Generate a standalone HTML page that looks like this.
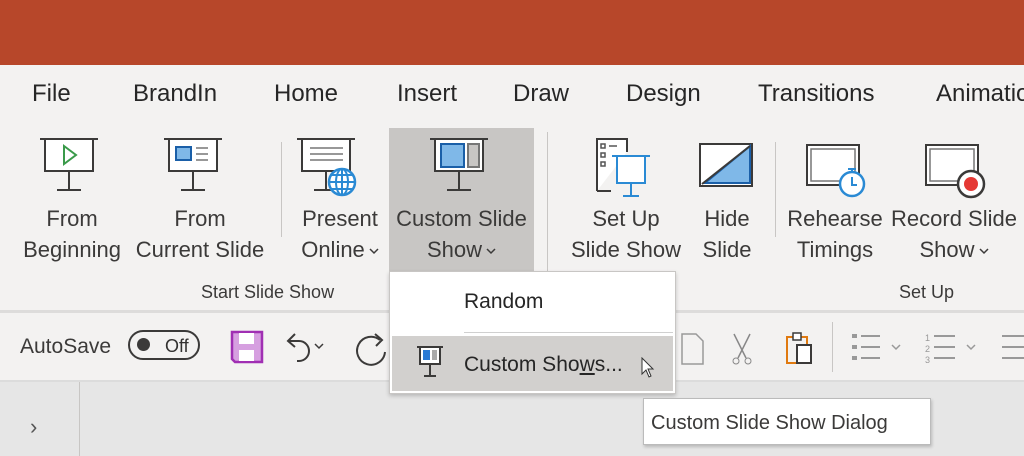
<!DOCTYPE html><html><head><style>
body{margin:0;width:1024px;height:456px;overflow:hidden;position:relative;background:#f3f2f1;font-family:"Liberation Sans",sans-serif;color:#323130}
.a{position:absolute}
.t{position:absolute;top:80px;font-size:24px;color:#262626}
.lbl{position:absolute;font-size:22px;text-align:center;line-height:31px;color:#3b3a39;white-space:nowrap}
.g{position:absolute;top:282px;font-size:18px;color:#3b3a39}
svg{position:absolute}
svg.cv{position:static;display:inline-block;vertical-align:middle;margin-left:4px}
</style></head><body>
<div class="a" style="left:0;top:0;width:1024px;height:65px;background:#b7472a"></div>
<div class="t" style="left:32px">File</div>
<div class="t" style="left:133px">BrandIn</div>
<div class="t" style="left:274px">Home</div>
<div class="t" style="left:397px">Insert</div>
<div class="t" style="left:513px">Draw</div>
<div class="t" style="left:626px">Design</div>
<div class="t" style="left:758px">Transitions</div>
<div class="t" style="left:936px">Animatio</div>
<div class="a" style="left:389px;top:128px;width:145px;height:143px;background:#c8c6c4"></div>
<div class="a" style="left:281px;top:142px;width:1px;height:95px;background:#c8c6c4"></div>
<div class="a" style="left:547px;top:132px;width:1px;height:140px;background:#c8c6c4"></div>
<div class="a" style="left:775px;top:142px;width:1px;height:95px;background:#c8c6c4"></div>
<svg style="left:40px;top:138px" width="60" height="60"><path d="M0 1H58M5 1V33H53V1M29 33V52M17 52H41" stroke="#3b3a39" stroke-width="2" fill="#fff"/><path d="M24 8L36 17L24 26Z" fill="none" stroke="#3a9a4a" stroke-width="2"/></svg>
<svg style="left:164px;top:138px" width="60" height="60"><path d="M0 1H58M5 1V33H53V1M29 33V52M17 52H41" stroke="#3b3a39" stroke-width="2" fill="#fff"/><rect x="12" y="9" width="15" height="13" fill="#7fb8e8" stroke="#1a5fa8" stroke-width="2"/><path d="M32 10H44M32 16H44M32 22H44" stroke="#777" stroke-width="1.5"/></svg>
<svg style="left:297px;top:138px" width="80" height="60"><path d="M0 1H58M5 1V33H53V1M29 33V52M17 52H41" stroke="#3b3a39" stroke-width="2" fill="#fff"/><path d="M13 10H46M13 16H46M13 22H46" stroke="#777" stroke-width="1.5"/><circle cx="45" cy="44" r="13" fill="#fff" stroke="#2a8ad4" stroke-width="2.5"/><path d="M32 44H58M45 31V57M35 37H55M35 51H55" stroke="#2a8ad4" stroke-width="2"/><ellipse cx="45" cy="44" rx="6" ry="13" fill="none" stroke="#2a8ad4" stroke-width="2"/></svg>
<svg style="left:430px;top:138px" width="60" height="60"><path d="M0 1H58M5 1V33H53V1M29 33V52M17 52H41" stroke="#3b3a39" stroke-width="2" fill="#fff"/><rect x="11" y="6" width="23" height="23" fill="#7fb8e8" stroke="#1a5fa8" stroke-width="2"/><rect x="38" y="6" width="11" height="23" fill="#c8c6c4" stroke="#777" stroke-width="2"/></svg>
<svg style="left:596px;top:138px" width="60" height="60"><path d="M1 53V1H31V14" stroke="#3b3a39" stroke-width="2" fill="#fff"/><path d="M1 53H15" stroke="#3b3a39" stroke-width="2"/><rect x="5" y="6" width="4" height="4" fill="none" stroke="#555" stroke-width="1.5"/><rect x="5" y="15" width="4" height="4" fill="none" stroke="#555" stroke-width="1.5"/><rect x="5" y="24" width="4" height="4" fill="none" stroke="#555" stroke-width="1.5"/><path d="M13 8H21" stroke="#555" stroke-width="1.5"/><path d="M16 18H54M21 18V45H49V18M35 45V58M27 58H43" stroke="#2a8ad4" stroke-width="2" fill="#fff"/></svg>
<svg style="left:699px;top:143px" width="56" height="48"><rect x="1" y="1" width="52" height="42" fill="#fff" stroke="#3b3a39" stroke-width="2"/><path d="M51 3V40H6Z" fill="#7fb8e8" stroke="#1a5fa8" stroke-width="2"/><path d="M3 41L51 3" stroke="#3b3a39" stroke-width="2"/></svg>
<svg style="left:806px;top:144px" width="64" height="56"><rect x="1" y="1" width="52" height="40" fill="#fff" stroke="#3b3a39" stroke-width="2"/><rect x="5" y="5" width="44" height="32" fill="none" stroke="#777" stroke-width="1.5"/><circle cx="46" cy="40" r="12" fill="#fff" stroke="#2a8ad4" stroke-width="2.5"/><path d="M46 33V41H51M42 25H50M46 25V28" stroke="#2a8ad4" stroke-width="2" fill="none"/></svg>
<svg style="left:925px;top:144px" width="64" height="56"><rect x="1" y="1" width="52" height="40" fill="#fff" stroke="#3b3a39" stroke-width="2"/><rect x="5" y="5" width="44" height="32" fill="none" stroke="#777" stroke-width="1.5"/><circle cx="46" cy="40" r="13" fill="#fff" stroke="#3b3a39" stroke-width="2.5"/><circle cx="46" cy="40" r="7" fill="#e53935"/></svg>
<div class="lbl" style="left:18px;top:203px;width:108px">From<br>Beginning</div>
<div class="lbl" style="left:128px;top:203px;width:144px">From<br>Current Slide</div>
<div class="lbl" style="left:290px;top:203px;width:100px">Present<br>Online<svg class="cv" width="10" height="8"><path d="M1 2L5 6L9 2" fill="none" stroke="#3b3a39" stroke-width="1.5"/></svg></div>
<div class="lbl" style="left:385px;top:203px;width:153px">Custom Slide<br>Show<svg class="cv" width="10" height="8"><path d="M1 2L5 6L9 2" fill="none" stroke="#3b3a39" stroke-width="1.5"/></svg></div>
<div class="lbl" style="left:564px;top:203px;width:124px">Set Up<br>Slide Show</div>
<div class="lbl" style="left:695px;top:203px;width:64px">Hide<br>Slide</div>
<div class="lbl" style="left:783px;top:203px;width:104px">Rehearse<br>Timings</div>
<div class="lbl" style="left:884px;top:203px;width:140px">Record Slide<br>Show<svg class="cv" width="10" height="8"><path d="M1 2L5 6L9 2" fill="none" stroke="#3b3a39" stroke-width="1.5"/></svg></div>
<div class="g" style="left:201px">Start Slide Show</div>
<div class="g" style="left:899px">Set Up</div>
<div class="a" style="left:0;top:310px;width:1024px;height:3px;background:#dddcdb"></div>
<div class="a" style="left:20px;top:335px;font-size:21px;color:#3b3a39">AutoSave</div>
<div class="a" style="left:128px;top:330px;width:72px;height:30px;border:2px solid #3b3a39;border-radius:16px;box-sizing:border-box"></div>
<div class="a" style="left:137px;top:338px;width:13px;height:13px;border-radius:50%;background:#3b3a39"></div>
<div class="a" style="left:165px;top:336px;font-size:18px">Off</div>
<svg style="left:230px;top:330px" width="34" height="34"><path d="M2 2H32V32H5L2 29Z" fill="#d69fe0" stroke="#a02fb3" stroke-width="2.5"/><rect x="9" y="3" width="15" height="11" fill="#fff"/><rect x="9" y="20" width="15" height="11" fill="#fff"/></svg>
<svg style="left:285px;top:330px" width="60" height="34"><path d="M10 4L3 11L10 17M3 11H14A10 10 0 0 1 14 31H12" fill="none" stroke="#3b3a39" stroke-width="2"/><path d="M30 14L34 18L38 14" fill="none" stroke="#3b3a39" stroke-width="1.5"/></svg>
<svg style="left:355px;top:330px" width="36" height="38"><path d="M25 10A14 14 0 1 0 30 22" fill="none" stroke="#3b3a39" stroke-width="2"/><path d="M20 4L27 10L21 16" fill="none" stroke="#3b3a39" stroke-width="2"/></svg>
<svg style="left:676px;top:333px" width="30" height="34"><path d="M6 1H20L27 8V31H6Z" fill="none" stroke="#999" stroke-width="1.5"/></svg>
<svg style="left:730px;top:333px" width="24" height="34"><path d="M4 1L16 25M20 1L8 25" stroke="#888" stroke-width="1.5"/><circle cx="6" cy="28" r="3" fill="none" stroke="#888"/><circle cx="18" cy="28" r="3" fill="none" stroke="#888"/></svg>
<svg style="left:785px;top:331px" width="32" height="36"><path d="M2 6H22V32H2Z" fill="none" stroke="#e07a10" stroke-width="2"/><rect x="8" y="2" width="8" height="7" fill="#fff" stroke="#3b3a39" stroke-width="1.5"/><rect x="12" y="14" width="14" height="18" fill="#fff" stroke="#3b3a39" stroke-width="2"/></svg>
<div class="a" style="left:832px;top:322px;width:1px;height:50px;background:#c8c6c4"></div>
<svg style="left:850px;top:333px" width="60" height="30"><g fill="#999"><rect x="2" y="1" width="5" height="4"/><rect x="2" y="12" width="5" height="4"/><rect x="2" y="23" width="5" height="4"/></g><path d="M11 3H30M11 14H30M11 25H30" stroke="#999" stroke-width="2"/><path d="M42 12L46 16L50 12" fill="none" stroke="#999" stroke-width="1.5"/></svg>
<svg style="left:925px;top:333px" width="60" height="30"><text x="0" y="8" font-size="9" fill="#999">1</text><text x="0" y="19" font-size="9" fill="#999">2</text><text x="0" y="30" font-size="9" fill="#999">3</text><path d="M9 3H30M9 14H30M9 25H30" stroke="#999" stroke-width="2"/><path d="M42 12L46 16L50 12" fill="none" stroke="#999" stroke-width="1.5"/></svg>
<svg style="left:1000px;top:333px" width="24" height="30"><path d="M2 3H24M2 14H24M2 25H24" stroke="#999" stroke-width="2"/></svg>
<div class="a" style="left:0;top:380px;width:1024px;height:76px;background:#e6e6e6"></div>
<div class="a" style="left:79px;top:382px;width:1px;height:74px;background:#c8c6c4"></div>
<div class="a" style="left:0;top:380px;width:1024px;height:2px;background:#dcdcdc"></div>
<div class="a" style="left:30px;top:414px;font-size:22px;color:#555">›</div>
<div class="a" style="left:389px;top:271px;width:287px;height:123px;background:#fff;border:1px solid #c8c6c4;box-shadow:0 2px 4px rgba(0,0,0,.2);box-sizing:border-box"></div>
<div class="a" style="left:464px;top:290px;font-size:21px;color:#262626">Random</div>
<div class="a" style="left:464px;top:332px;width:209px;height:1px;background:#d0d0d0"></div>
<div class="a" style="left:392px;top:336px;width:281px;height:55px;background:#d2d0ce"></div>
<svg style="left:416px;top:346px" width="30" height="32"><path d="M1 1H27M4 1V18H24V1M14 18V30M8 30H20" stroke="#3b3a39" stroke-width="2" fill="#fff"/><rect x="7" y="4" width="7" height="10" fill="#2a7ad4"/><rect x="16" y="4" width="5" height="10" fill="#aaa"/></svg>
<div class="a" style="left:464px;top:353px;font-size:21px;color:#262626">Custom Sho<u>w</u>s...</div>
<svg style="left:641px;top:357px" width="14" height="22"><path d="M1 1V17L5 13L8 20L10 19L7 12H12Z" fill="#fff" stroke="#333" stroke-width="1"/></svg>
<div class="a" style="left:643px;top:398px;width:288px;height:47px;background:#fff;border:1px solid #bbb;box-shadow:1px 2px 3px rgba(0,0,0,.2);box-sizing:border-box"></div>
<div class="a" style="left:651px;top:412px;font-size:20px;color:#3b3a39">Custom Slide Show Dialog</div>
</body></html>
